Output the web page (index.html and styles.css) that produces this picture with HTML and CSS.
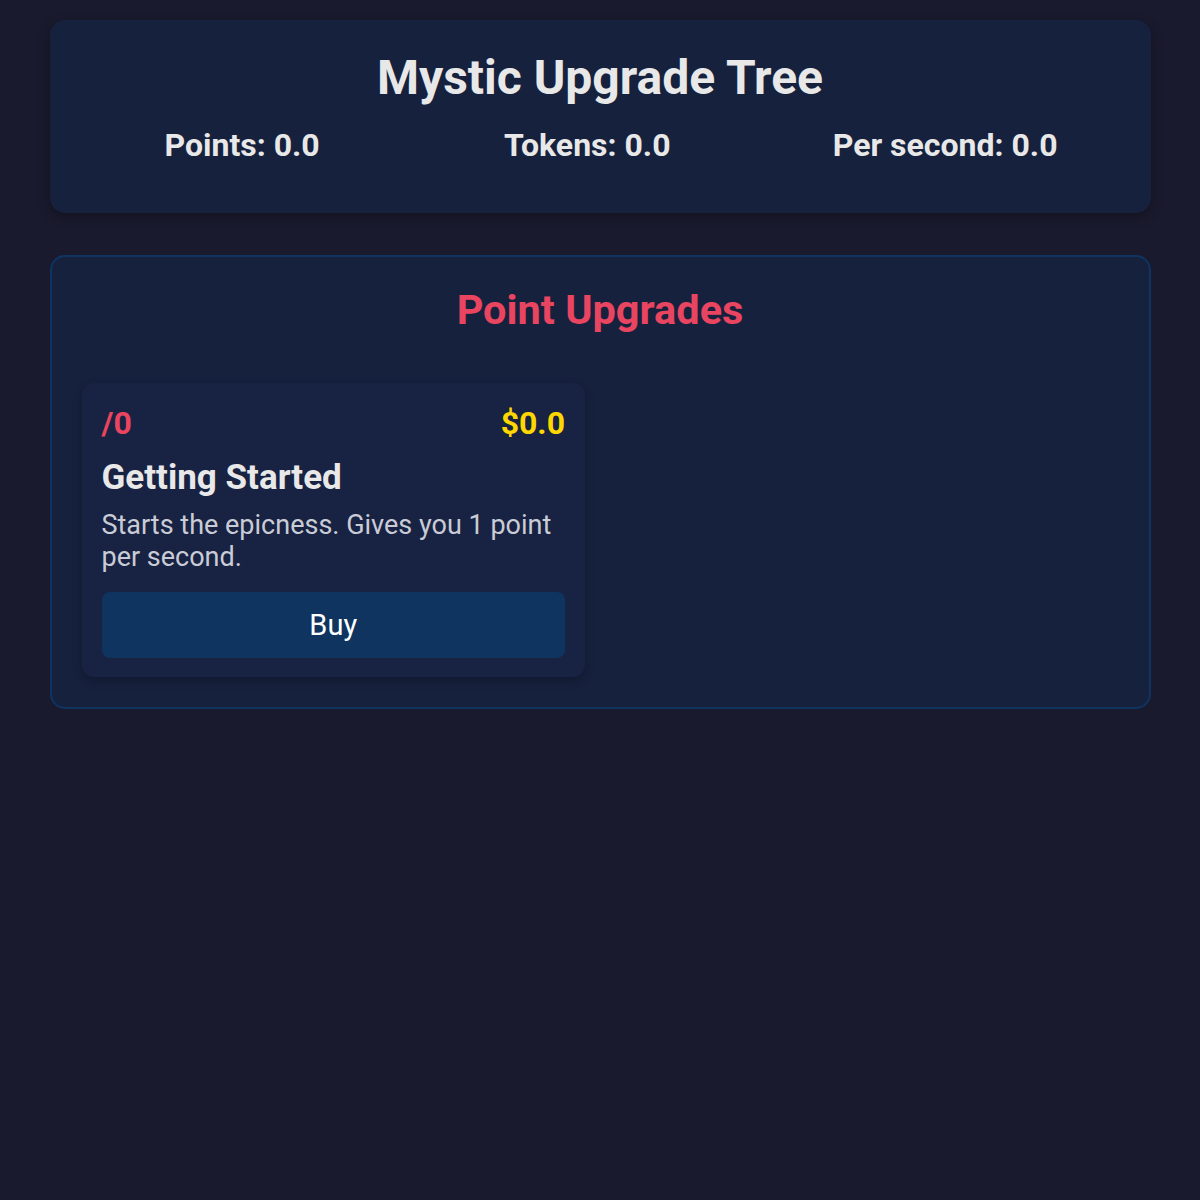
FILE: index.html
```html
<!DOCTYPE html>
<html lang="en">
<head>
    <meta charset="UTF-8">
    <meta name="viewport" content="width=device-width, initial-scale=1.0">
    <title>Mystic Upgrade Tree</title>
    <link rel="stylesheet" href="styles.css">
</head>

<body>
    <div class="container">
        <div class="header">
            <h1 class="title">Mystic Upgrade Tree</h1>
            <div class="stats">
                <div class="stat">Points: <span id="points">0.0</span></div>
                <div class="stat stat-mid">Tokens: <span id="tokens">0.0</span></div>
                <div class="stat">Per second: <span id="perSecond">0.0</span></div>
            </div>
        </div>

        <div class="upgrade-section">
            <h2 class="section-title">Point Upgrades</h2>
            <div class="upgrade-list">
                <div class="upgrade-card">
                    <div class="upgrade-top">
                        <span class="upgrade-level">/0</span>
                        <span class="upgrade-cost">$0.0</span>
                    </div>
                    <h3 class="upgrade-name">Getting Started</h3>
                    <p class="upgrade-desc">Starts the epicness. Gives you 1 point per second.</p>
                    <button class="buy-btn">Buy</button>
                </div>
            </div>
        </div>
    </div>
</body>
</html>
```

FILE: styles.css
```css
/* General Page Styling */
body, html {
    font-family: Roboto, 'Liberation Sans', sans-serif;
    background-color: #1a1a2e;
    color: #e8e8e8;
    padding: 0;
    margin: 0;
}

.container {
    max-width: 1101px;
    margin: 0 auto;
    padding: 20px 0;
}

/* Header */
.header {
    background: #16213e;
    border-radius: 15px;
    padding: 30px 30px 49px;
    box-shadow: 0px 4px 12px rgba(0, 0, 0, 0.3);
}

.title {
    margin: 0;
    text-align: center;
    font-size: 48px;
    line-height: 56px;
    font-weight: 700;
}

.stats {
    display: flex;
    justify-content: space-between;
    margin-top: 20px;
    padding: 0 63px 0 85px;
}

.stat {
    font-size: 32px;
    line-height: 38px;
    font-weight: 700;
}

.stat-mid {
    margin-left: 22px;
}

/* Upgrades */
.upgrade-section {
    margin-top: 42px;
    background: #16213e;
    border: 2px solid #0f3460;
    border-radius: 15px;
    padding: 30px;
}

.section-title {
    margin: 0 0 50px;
    text-align: center;
    color: #e94560;
    font-size: 41.5px;
    line-height: 46px;
    font-weight: 700;
}

.upgrade-list {
    display: grid;
    grid-template-columns: repeat(auto-fill, minmax(450px, 1fr));
    gap: 30px;
}

.upgrade-card {
    background: #182242;
    border-radius: 12px;
    padding: 20px 20px 19px;
    box-shadow: 0px 4px 10px rgba(0, 0, 0, 0.25);
}

.upgrade-top {
    display: flex;
    justify-content: space-between;
    font-size: 32px;
    line-height: 40px;
    font-weight: 700;
}

.upgrade-level {
    color: #e94560;
}

.upgrade-cost {
    color: #ffd700;
}

.upgrade-name {
    margin: 15px 0 0;
    font-size: 35px;
    line-height: 40px;
    font-weight: 700;
}

.upgrade-desc {
    margin: 11px 0 0;
    font-size: 27px;
    line-height: 32px;
    color: #c9ccd6;
}

.buy-btn {
    display: block;
    width: 100%;
    margin-top: 19px;
    padding: 15px;
    background-color: #0f3460;
    color: #ffffff;
    border: none;
    border-radius: 8px;
    font-family: inherit;
    font-size: 29px;
    line-height: 36px;
    cursor: pointer;
}

.buy-btn:hover {
    background-color: #16457a;
}
```
